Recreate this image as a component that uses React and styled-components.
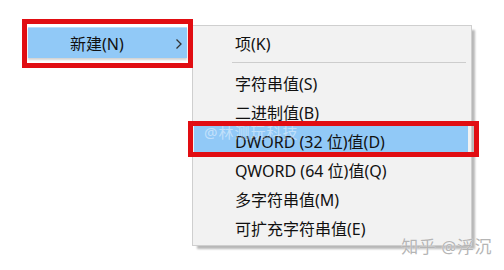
import React from "react";
import styled, { createGlobalStyle } from "styled-components";

const GlobalStyle = createGlobalStyle`
  html, body {
    margin: 0;
    padding: 0;
    background: #fff;
  }
  body {
    font-family: "Noto Sans", "Noto Sans CJK SC", sans-serif;
    color: #111;
  }
`;

const items = [
  { label: "字符串值(S)" },
  { label: "二进制值(B)" },
  { label: "DWORD (32 位)值(D)", active: true },
  { label: "QWORD (64 位)值(Q)" },
  { label: "多字符串值(M)" },
  { label: "可扩充字符串值(E)" },
];

const App = () => {
  return (
    <StPage>
      <GlobalStyle />
      <StParent>
        <StParentItem>
          <span>新建(N)</span>
          <StChevron viewBox="0 0 8 12">
            <path d="M1.5 1.5 L6 6 L1.5 10.5" fill="none" stroke="#333" strokeWidth="1.3" />
          </StChevron>
        </StParentItem>
      </StParent>
      <StSubmenu>
        <StItem>项(K)</StItem>
        <StSeparator />
        {items.map((item) => (
          <StItem key={item.label} active={item.active}>
            {item.active && <StMark>@林测玩科技</StMark>}
            {item.label}
          </StItem>
        ))}
      </StSubmenu>
      <StCredit>知乎 @浮沉</StCredit>
    </StPage>
  );
};

const StPage = styled.div`
  position: relative;
  width: 504px;
  height: 270px;
  display: flex;
  align-items: flex-start;
  padding: 19px 0 0 22px;
  box-sizing: border-box;
  overflow: hidden;
`;

const StParent = styled.div`
  width: 171px;
  height: 49px;
  box-sizing: border-box;
  border: 5px solid #e10d12;
  padding: 3px 1px 0 1px;
  position: relative;
  z-index: 2;
`;

const StParentItem = styled.div`
  height: 31px;
  background: #91c9f7;
  border-top: 1px solid #b9dcf9;
  box-sizing: border-box;
  box-shadow: 0 2px 2px rgba(0, 0, 0, 0.18);
  display: flex;
  align-items: center;
  padding: 0 4px 0 42px;
  font-size: 16px;
  justify-content: space-between;
`;

const StChevron = styled.svg`
  width: 8px;
  height: 12px;
  margin-top: 2px;
`;

const StSubmenu = styled.div`
  margin: 6px 0 0 -1px;
  width: 280px;
  box-sizing: border-box;
  background: #f2f2f2;
  border: 1px solid #cfcfcf;
  padding: 2px 3px 3px 1px;
  box-shadow: 4px 4px 2px -1px rgba(0, 0, 0, 0.28);
  display: flex;
  flex-direction: column;
`;

const StItem = styled.div`
  position: relative;
  height: 29px;
  display: flex;
  align-items: center;
  padding-left: 41px;
  font-size: 16px;
  background: ${({ active }) => (active ? "#91c9f7" : "transparent")};

  &:first-child {
    height: 30px;
  }

  ${({ active }) =>
    active &&
    `
    &::after {
      content: "";
      position: absolute;
      left: -6px;
      right: -11px;
      top: -5px;
      bottom: -2px;
      border: 5px solid #e10d12;
    }
  `}
`;

const StSeparator = styled.div`
  height: 1px;
  background: #cdcdcd;
  margin: 4px 2px 5px 38px;
`;

const StMark = styled.span`
  position: absolute;
  left: 10px;
  top: -5px;
  font-size: 15px;
  color: rgba(255, 255, 255, 0.45);
  letter-spacing: 1px;
`;

const StCredit = styled.div`
  position: absolute;
  right: 12px;
  bottom: 12px;
  font-size: 17px;
  color: #b5b5b5;
  letter-spacing: 0.5px;
  text-shadow: 0 0 1px #fff;
`;

export default App;
